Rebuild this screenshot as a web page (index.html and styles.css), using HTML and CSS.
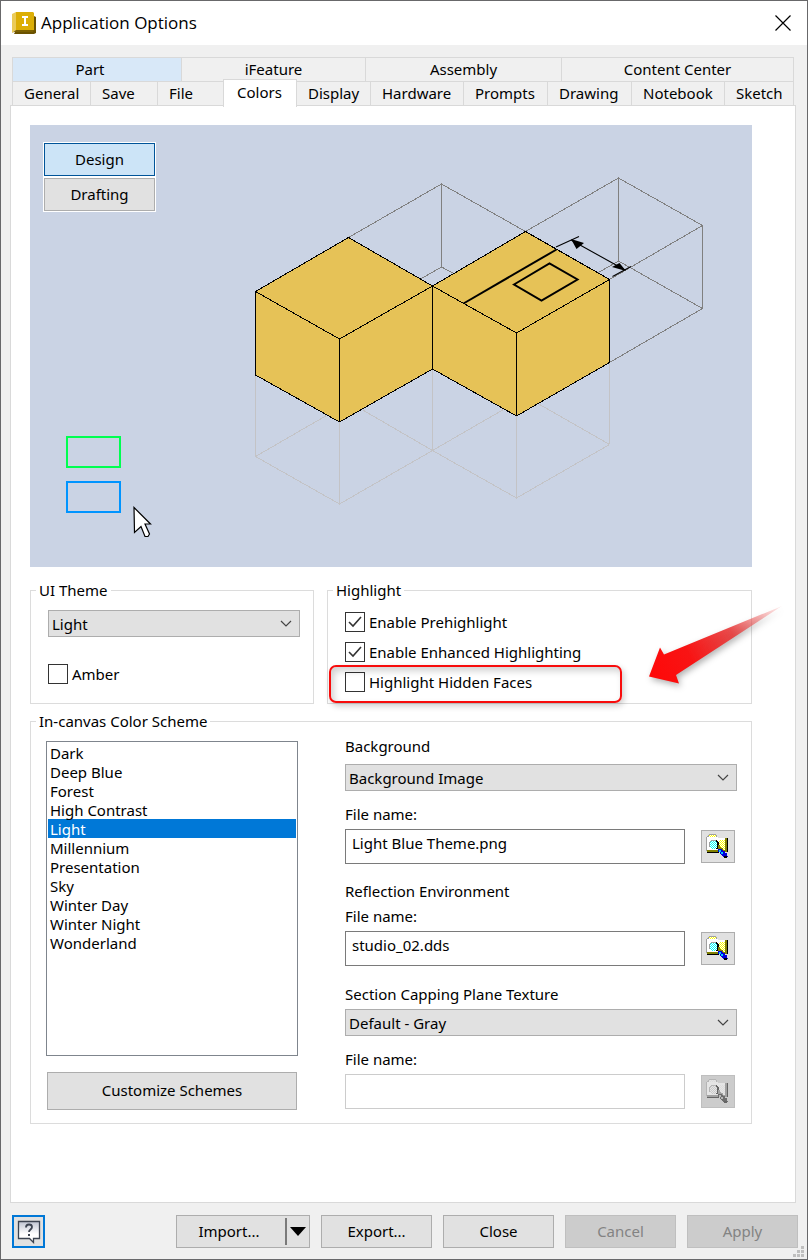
FILE: index.html
```html
<!DOCTYPE html>
<html lang="en">
<head>
<meta charset="utf-8">
<title>Application Options</title>
<link rel="stylesheet" href="styles.css">
</head>
<body>
<svg class="defs" width="0" height="0" aria-hidden="true">
  <defs>
    <pattern id="dither-yellow" width="2" height="2" patternUnits="userSpaceOnUse">
      <rect width="2" height="2" fill="#fff"/><rect width="1" height="1" fill="#ff0"/><rect x="1" y="1" width="1" height="1" fill="#ff0"/>
    </pattern>
    <pattern id="dither-cyan" width="2" height="2" patternUnits="userSpaceOnUse">
      <rect width="2" height="2" fill="#fff"/><rect width="1" height="1" fill="#0ff"/><rect x="1" y="1" width="1" height="1" fill="#0ff"/>
    </pattern>
    <symbol id="browse" viewBox="0 0 22 24">
      <path d="M2 1h1V0h7v1h1v2H1V2z" fill="#a0a0a0"/>
      <path d="M3 1h7v2H3z" fill="url(#dither-yellow)"/>
      <path d="M0 3h12v1h8v13H0z" fill="#a0a0a0"/>
      <path d="M1 3h11v1h7v12H1z" fill="#fff"/>
      <path d="M13 6h6v10h-6z" fill="url(#dither-yellow)"/>
      <path d="M19 4h2v14H1v-2h18z" fill="#808000"/>
      <path d="M21 4h1v14h-1z" fill="#000"/>
      <path d="M1 18h12v1H1z" fill="#000"/>
      <path d="M5 6h6v1h1v1h1v6h-1v1H5v-1H4v-1H3V8h1V7h1z" fill="#000"/>
      <path d="M5 6h5v9H5v-1H4v-1H3V8h1V7h1z" fill="#a0a0a0"/>
      <path d="M5 7h5v1h1v6h-1v1H5v-1H4V8h1z" fill="url(#dither-cyan)"/>
      <path d="M12 11h2v2h1v1h2v2h-5z" fill="#808000"/>
      <path d="M12 15h4v1h1v1h2v2h2v3h1v1h-1v1h-3v-1h-1v-1h-1v-1h-1v-1h-1v-2h-2z" fill="#0000d8"/>
      <path d="M13 16h2v2h-2zM15 18h2v2h-2z" fill="#00c8ff"/>
      <path d="M18 22h3v2h-3z" fill="#000"/>
    </symbol>
  </defs>
</svg>

<main class="dialog">
  <header class="titlebar">
    <svg class="app-icon" viewBox="0 0 24 23" aria-hidden="true">
      <path d="M2 22 4 18h18V4l2 1v16l-2 1z" fill="#6b5200"/>
      <path d="M0 2 4 0v18l-4 3z" fill="#ebcb58"/>
      <path d="M0 21 4 18h18l-1 2H2z" fill="#7c6000"/>
      <path d="M4 0h17l1 1v17H4z" fill="#dcae06"/>
      <path d="M10 4h6v2h-2v6h2v2h-6v-2h2V6h-2z" fill="#fff"/>
    </svg>
    <h1 class="title">Application Options</h1>
    <button class="close" type="button" aria-label="Close window">
      <svg viewBox="0 0 16 16" aria-hidden="true"><path d="M.5.5l15 15M15.500.5l-15 15" stroke="#000" stroke-width="1.200"/></svg>
    </button>
  </header>

  <nav class="tabs" aria-label="Option pages">
    <div class="tab-row tab-row-back">
      <button class="tab tab-hover" type="button">Part</button>
      <button class="tab" type="button">iFeature</button>
      <button class="tab" type="button">Assembly</button>
      <button class="tab" type="button">Content Center</button>
    </div>
    <div class="tab-row tab-row-front">
      <button class="tab" type="button">General</button>
      <button class="tab" type="button">Save</button>
      <button class="tab" type="button">File</button>
      <button class="tab tab-active" type="button">Colors</button>
      <button class="tab" type="button">Display</button>
      <button class="tab" type="button">Hardware</button>
      <button class="tab" type="button">Prompts</button>
      <button class="tab" type="button">Drawing</button>
      <button class="tab" type="button">Notebook</button>
      <button class="tab" type="button">Sketch</button>
    </div>
  </nav>

  <section class="page">
    <div class="preview">
      <svg class="scene" viewBox="30 125 722 442" role="img" aria-label="Color scheme preview">
        <g fill="none" stroke="#c3c3c6" shape-rendering="crispEdges">
          <path d="M255.500 375v81M339.500 422v82M432.500 369v82M516.500 416v82M609.500 362v82"/>
          <path d="M255.500 456.500l84 47.500 93-53.500 84 47.500 93-53.500"/>
          <path d="M255.500 456.500l71-41M361 409l71.500 41.500 71-41M538 403.500l71.500 41"/>
        </g>
        <g fill="none" stroke="#808080" shape-rendering="crispEdges">
          <path d="M348.500 237.500l93-53.500 84 47.500 93-53.500 84 47.500v83l-93 54"/>
          <path d="M441.500 184v83l-21 12M441.500 267l13 7M618.500 178v83l84 47.500M618.500 261l-21 12M702.500 225.500l-93 54"/>
        </g>
        <g fill="#e6c257" stroke="#000" stroke-linejoin="round" shape-rendering="crispEdges">
          <path d="M255.500 291.500l93-54 84 48.500v83l-93 53-84-47z"/>
          <path d="M432.500 286l93-54.500 84 48v83l-93 53.500-84-47z"/>
          <path fill="none" d="M255.500 291.500l84 47.500 93-53 84 47 93-53.500M339.500 339v83M516.500 333v83"/>
        </g>
        <g fill="none" stroke="#000" stroke-width="2">
          <path d="M463.500 303.500l93-54"/>
          <path d="M514 284.500l35.500-21 28 16-36 21z"/>
        </g>
        <g stroke="#000" stroke-width="1.100">
          <path d="M556 247l23-10.500M571 240l54 30M612.500 276.500l18.500-10"/>
          <path stroke="none" d="M571 239l13 4-7.500 6zM626 271l-14-4 7.500-4z"/>
        </g>
        <path d="M67 437h53v30H67z" fill="none" stroke="#00ff50" stroke-width="2"/>
        <path d="M67 482h53v30H67z" fill="none" stroke="#0094ff" stroke-width="2"/>
        <path d="M134 507.500l16.500 16.500h-5.500l4.500 10-1.500 2.500h-3l-4-10-6.500 6z" fill="#fff" stroke="#000" stroke-width="1.200"/>
      </svg>
      <div class="modes">
        <button class="btn mode mode-on" type="button">Design</button>
        <button class="btn mode" type="button">Drafting</button>
      </div>
    </div>

    <div class="groups">
      <fieldset class="group theme">
        <legend>UI Theme</legend>
        <select class="combo" aria-label="UI Theme"><option>Light</option></select>
        <label class="check"><input type="checkbox">Amber</label>
      </fieldset>
      <fieldset class="group highlight">
        <legend>Highlight</legend>
        <label class="check"><input type="checkbox" checked>Enable Prehighlight</label>
        <label class="check"><input type="checkbox" checked>Enable Enhanced Highlighting</label>
        <label class="check callout"><input type="checkbox">Highlight Hidden Faces</label>
        <svg class="pointer" viewBox="0 0 144 92" aria-hidden="true">
          <defs>
            <linearGradient id="fade" gradientUnits="userSpaceOnUse" x1="5" y1="74" x2="138" y2="6">
              <stop offset="0" stop-color="#ff0808"/>
              <stop offset=".3" stop-color="#f81414"/>
              <stop offset=".62" stop-color="#e83a3a" stop-opacity=".9"/>
              <stop offset="1" stop-color="#f06060" stop-opacity=".1"/>
            </linearGradient>
          </defs>
          <path d="M5 76.500L16 47.500l4 7L138 6 32 75l3 8.500z" fill="url(#fade)"/>
        </svg>
      </fieldset>
    </div>

    <fieldset class="group scheme">
      <legend>In-canvas Color Scheme</legend>
      <div class="scheme-left">
        <select class="list" size="16" aria-label="In-canvas Color Scheme">
          <option>Dark</option>
          <option>Deep Blue</option>
          <option>Forest</option>
          <option>High Contrast</option>
          <option selected>Light</option>
          <option>Millennium</option>
          <option>Presentation</option>
          <option>Sky</option>
          <option>Winter Day</option>
          <option>Winter Night</option>
          <option>Wonderland</option>
        </select>
        <button class="btn customize" type="button">Customize Schemes</button>
      </div>
      <div class="scheme-right">
        <div class="field field-wide">
          <label for="background">Background</label>
          <select class="combo" id="background"><option>Background Image</option></select>
        </div>
        <div class="field">
          <label for="bg-file">File name:</label>
          <div class="file">
            <input class="text" id="bg-file" type="text" value="Light Blue Theme.png">
            <button class="btn browse" type="button" aria-label="Browse background image"><svg aria-hidden="true"><use href="#browse"/></svg></button>
          </div>
        </div>
        <div class="field reflection">
          <span>Reflection Environment</span>
          <label for="env-file">File name:</label>
          <div class="file">
            <input class="text" id="env-file" type="text" value="studio_02.dds">
            <button class="btn browse" type="button" aria-label="Browse reflection environment"><svg aria-hidden="true"><use href="#browse"/></svg></button>
          </div>
        </div>
        <div class="field capping">
          <label for="capping">Section Capping Plane Texture</label>
          <select class="combo" id="capping"><option>Default - Gray</option></select>
        </div>
        <div class="field">
          <label for="cap-file">File name:</label>
          <div class="file">
            <input class="text" id="cap-file" type="text" disabled>
            <button class="btn browse" type="button" disabled aria-label="Browse capping texture"><svg aria-hidden="true"><use href="#browse"/></svg></button>
          </div>
        </div>
      </div>
    </fieldset>
  </section>

  <footer class="footer">
    <button class="help" type="button" aria-label="Help">
      <svg viewBox="0 0 24 24" aria-hidden="true">
        <defs><linearGradient id="bubble" x1="0" y1="0" x2="0" y2="1"><stop offset="0" stop-color="#bfc4d2"/><stop offset=".6" stop-color="#fff"/></linearGradient></defs>
        <path d="M1.500 1.500h21v17h-6v4l-4-4h-11z" fill="url(#bubble)" stroke="#3c4350" stroke-width="1.300"/>
        <path d="M9 7.500q0-3 3-3t3 2.500c0 2.500-3 2.500-3 5" fill="none" stroke="#3c4350" stroke-width="1.800"/>
        <path d="M11 14h2v2h-2z" fill="#3c4350"/>
      </svg>
    </button>
    <div class="split">
      <button class="split-main" type="button">Import...</button>
      <button class="split-arrow" type="button" aria-label="More import options"><svg viewBox="0 0 16 9" aria-hidden="true"><path d="M0 0h16L8 9z"/></svg></button>
    </div>
    <button class="btn action" type="button">Export...</button>
    <button class="btn action" type="button">Close</button>
    <button class="btn action" type="button" disabled>Cancel</button>
    <button class="btn action" type="button" disabled>Apply</button>
    <svg class="grip" viewBox="0 0 11 11" aria-hidden="true"><path d="M8 0h3v3H8zM4 4h3v3H4zM8 4h3v3H8zM0 8h3v3H0zM4 8h3v3H4zM8 8h3v3H8z" fill="#bfbfbf"/></svg>
  </footer>
</main>
</body>
</html>
```
FILE: styles.css
```css
* { box-sizing: border-box; }

body {
  margin: 0;
  color: #000;
  background: #f0f0f0;
  font: 15px/20px "Noto Sans", "Open Sans", sans-serif;
}

button, input, select { font: inherit; color: inherit; margin: 0; }
button { padding: 0 0 2px; }

.defs { position: absolute; }

.dialog {
  display: flex;
  flex-direction: column;
  min-height: 100vh;
  border: 1px solid #68686a;
  background: #f0f0f0;
}

.titlebar {
  display: flex;
  align-items: center;
  height: 44px;
  padding: 0 16px 0 11px;
  background: #fff;
}
.app-icon { width: 24px; height: 23px; }
.title {
  flex: 1;
  margin: 0 0 0 5px;
  font: 400 17px/24px "Open Sans", "Noto Sans", sans-serif;
}
.close { border: 0; padding: 0; background: none; width: 16px; height: 16px; }
.close svg { display: block; width: 16px; height: 16px; }

/* Tabs */
.tabs { margin: 12px 13px 0 11px; }
.tab-row { display: grid; border-left: 1px solid #d9d9d9; }
.tab-row-back { grid-template-columns: 169fr 184fr 196fr 232fr; }
.tab-row-front { grid-template-columns: 78fr 67fr 66fr 73fr 74fr 93fr 84fr 84fr 93fr 69fr; }
.tab {
  min-width: 0;
  height: 24px;
  border: 1px solid #d9d9d9;
  border-width: 1px 1px 0 0;
  background: #f0f0f0;
  white-space: nowrap;
}
.tab-row-front .tab { padding-left: 11px; text-align: left; }
.tab-row-back .tab-hover { padding-right: 14px; background: #d8e8f8; }
.tab-row-front .tab-active {
  position: relative;
  height: 28px;
  margin: -2px 0 -2px -1px;
  padding: 0 0 4px 13px;
  border-width: 1px 1px 0;
  background: #fff;
}

.page {
  flex: 1;
  margin: 0 11px 0 9px;
  padding: 19px 43px 0 19px;
  border: 1px solid #d9d9d9;
  background: #fff;
}

/* Buttons */
.btn { border: 1px solid #adadad; background: #e1e1e1; }
.btn:disabled { color: #838383; background: #ccc; border-color: #bfbfbf; }

/* Preview */
.preview { display: grid; background: #cad3e4; }
.preview > * { grid-area: 1 / 1; }
.scene { display: block; width: 100%; }
.modes {
  display: flex;
  flex-direction: column;
  gap: 2px;
  align-self: start;
  justify-self: start;
  margin: 18px 14px;
}
.mode { width: 111px; height: 33px; outline: 1px solid #fff; }
.mode-on { background: #cce4f7; border-color: #005499; }

/* Group boxes */
.groups {
  display: grid;
  grid-template-columns: 284fr 425fr;
  gap: 13px;
  margin-top: 13px;
}
.group { min-width: 0; margin: 0; border: 1px solid #dcdcdc; }
legend { padding: 0 3px; margin-left: -12px; height: 20px; }
.theme { padding: 10px 13px 0 17px; }
.highlight { position: relative; padding: 11px 16px 2px 17px; }
.theme .check { margin-top: 26px; }

.check { display: flex; align-items: center; gap: 4px; height: 22px; margin-bottom: 8px; }
.theme .check { margin-bottom: 0; }
.check input {
  appearance: none;
  width: 20px;
  height: 20px;
  border: 1px solid #333;
  background: #fff;
}
.check input:checked {
  background: #fff url("data:image/svg+xml,%3Csvg xmlns='http://www.w3.org/2000/svg' viewBox='0 0 18 18'%3E%3Cpath d='M3 9l4 4 8-9' fill='none' stroke='%23333' stroke-width='1.600'/%3E%3C/svg%3E");
}
.callout { position: relative; }
.callout::after {
  content: "";
  position: absolute;
  inset: -6px 113px -10px -16px;
  border: 2px solid #f80c0c;
  border-radius: 7px;
  box-shadow: 2px 3px 6px rgba(0, 0, 0, .2), inset 3px 4px 7px rgba(0, 0, 0, .18);
  pointer-events: none;
}
.pointer {
  position: absolute;
  top: 0;
  right: -37px;
  width: 144px;
  height: 92px;
  filter: drop-shadow(2px 3px 3px rgba(0, 0, 0, .3));
}

.combo {
  display: block;
  appearance: none;
  width: 100%;
  height: 27px;
  padding: 0 24px 0 3px;
  border: 1px solid #adadad;
  border-radius: 0;
  background: #e1e1e1 url("data:image/svg+xml,%3Csvg xmlns='http://www.w3.org/2000/svg' viewBox='0 0 12 8'%3E%3Cpath d='M1 1l5 5 5-5' fill='none' stroke='%23444' stroke-width='1.200'/%3E%3C/svg%3E") no-repeat right 7px center / 12px 8px;
}

/* Color scheme */
.scheme {
  display: grid;
  grid-template-columns: 252fr 392fr;
  gap: 47px;
  margin-top: 7px;
  padding: 5px 14px 13px 15px;
}
.scheme legend { margin-left: -10px; }
.scheme-left { display: flex; flex-direction: column; padding-top: 5px; }
.list {
  width: 100%;
  height: 315px;
  padding: 1px;
  border: 1px solid #7f858d;
  border-radius: 0;
  background: #fff;
  overflow: hidden;
}
.list option { height: 19px; min-height: 19px; padding: 0 2px; line-height: 19px; }
.list option:checked { color: #fff; background: #0078d7 linear-gradient(#0078d7, #0078d7); }
.customize { height: 38px; margin: 16px 1px 0; }

.scheme-right { display: flex; flex-direction: column; gap: 13px; }
.field { display: flex; flex-direction: column; gap: 5px; }
.field-wide { gap: 8px; }
.reflection { margin-top: 4px; }
.capping { margin-top: 5px; }
.file { display: flex; align-items: center; gap: 16px; padding-right: 2px; }
.text {
  flex: 1;
  min-width: 0;
  height: 35px;
  padding: 0 6px 8px;
  border: 1px solid #7a7a7a;
  border-radius: 0;
  background: #fff;
}
.text:disabled { border-color: #ccc; }
.browse { width: 34px; height: 33px; padding: 0; }
.browse svg { display: block; width: 22px; height: 24px; margin: 0 auto 2px 4px; shape-rendering: crispEdges; }
.browse:disabled svg { filter: grayscale(1); opacity: .5; }

/* Footer */
.footer {
  position: relative;
  display: flex;
  gap: 11px;
  padding: 12px 9px 11px 11px;
}
.help {
  width: 33px;
  height: 33px;
  margin-right: auto;
  padding: 0;
  border: 2px solid #0078d7;
  background: #e1e1e1;
}
.help svg { display: block; width: 24px; height: 24px; margin: 0 auto; }
.split {
  display: flex;
  align-items: center;
  width: 134px;
  border: 1px solid #adadad;
  background: #e1e1e1;
}
.split button { border: 0; background: none; }
.split-main { flex: 1; }
.split .split-main { padding-right: 4px; }
.split .split-arrow { width: 24px; height: 27px; padding: 0; border-left: 2px solid #7a7a7a; }
.split-arrow svg { display: block; width: 16px; height: 9px; margin: auto; }
.action { width: 111px; height: 33px; }
.grip { position: absolute; right: 3px; bottom: 2px; width: 11px; height: 11px; }
```
